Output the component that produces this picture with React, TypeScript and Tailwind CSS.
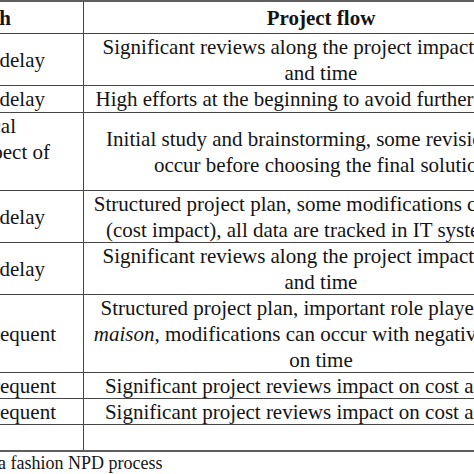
import React from 'react';

type Cell = { text: string; pr: string };
type Row = { h: string; left: Cell[]; right: React.ReactNode[]; last?: boolean };

const rows: Row[] = [
    {
        h: 'h-[52px]',
        left: [{ text: 'Considerable delay', pr: 'pr-[38px]' }],
        right: ['Significant reviews along the project impact on cost', 'and time'],
    },
    {
        h: 'h-[27px]',
        left: [{ text: 'Considerable delay', pr: 'pr-[38px]' }],
        right: ['High efforts at the beginning to avoid further changes'],
    },
    {
        h: 'h-[78px]',
        left: [
            { text: 'Technical', pr: 'pr-[67px]' },
            { text: 'aspect of', pr: 'pr-[33px]' },
            { text: '\u00a0', pr: 'pr-[33px]' },
        ],
        right: ['Initial study and brainstorming, some revisions can', 'occur before choosing the final solution'],
    },
    {
        h: 'h-[52px]',
        left: [{ text: 'Considerable delay', pr: 'pr-[38px]' }],
        right: ['Structured project plan, some modifications can occur', '(cost impact), all data are tracked in IT systems too'],
    },
    {
        h: 'h-[52px]',
        left: [{ text: 'Considerable delay', pr: 'pr-[38px]' }],
        right: ['Significant reviews along the project impact on cost', 'and time'],
    },
    {
        h: 'h-[78px]',
        left: [{ text: 'Not frequent', pr: 'pr-[27px]' }],
        right: [
            'Structured project plan, important role played by the',
            <>
                <i>maison</i>, modifications can occur with negative impact
            </>,
            'on time',
        ],
    },
    {
        h: 'h-[26px]',
        left: [{ text: 'Not frequent', pr: 'pr-[27px]' }],
        right: ['Significant project reviews impact on cost and time'],
    },
    {
        h: 'h-[26px]',
        left: [{ text: 'Not frequent', pr: 'pr-[27px]' }],
        right: ['Significant project reviews impact on cost and time'],
    },
    {
        h: 'h-[25px]',
        left: [],
        right: [],
        last: true,
    },
];

export default function App() {
    return (
        <div className="w-[474px] h-[474px] overflow-hidden bg-white text-[#141414] font-[family-name:Liberation_Serif,serif]">
            <div className="w-[558px] border-t-2 border-b-2 border-[#5e5e5e] text-[21px] leading-[26px]">
                {/* header */}
                <div className="flex h-[32px] border-b border-[#454545] font-bold">
                    <div className="w-[84px] shrink-0 border-r-[1.5px] border-[#454545] flex items-center justify-end overflow-hidden whitespace-nowrap pr-[72px]">
                        Approach
                    </div>
                    <div className="flex-1 flex items-center justify-center">Project flow</div>
                </div>

                {rows.map((row, i) => (
                    <div key={i} className={`flex ${row.h} ${row.last ? '' : 'border-b border-[#454545]'}`}>
                        <div className="w-[84px] shrink-0 border-r-[1.5px] border-[#454545] flex flex-col justify-center overflow-hidden whitespace-nowrap">
                            {row.left.map((c, j) => (
                                <div key={j} className={`flex justify-end ${c.pr}`}>
                                    <span className="shrink-0">{c.text}</span>
                                </div>
                            ))}
                        </div>
                        <div className="flex-1 flex flex-col items-center justify-center whitespace-nowrap">
                            {row.right.map((line, j) => (
                                <div key={j}>{line}</div>
                            ))}
                        </div>
                    </div>
                ))}
            </div>

            <div className="ml-[-2px] text-[18px] leading-[22px] whitespace-nowrap">a fashion NPD process</div>
        </div>
    );
}
